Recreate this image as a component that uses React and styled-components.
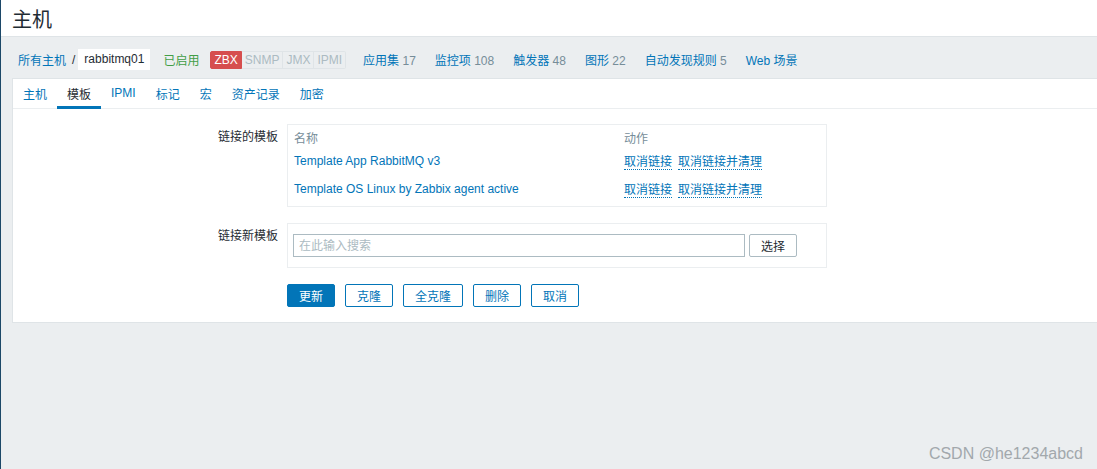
import React from 'react'
import styled, { createGlobalStyle } from 'styled-components'

const GlobalStyle = createGlobalStyle`
  html, body {
    margin: 0;
    padding: 0;
    background: #ebeef0;
  }
  body {
    font-family: "Liberation Sans", Arial, "Noto Sans CJK SC", sans-serif;
    font-size: 12px;
    color: #1f2c33;
    overflow: hidden;
  }
`

const tabs = ['主机', '模板', 'IPMI', '标记', '宏', '资产记录', '加密']
const stats = [
  { name: '应用集', count: 17 },
  { name: '监控项', count: 108 },
  { name: '触发器', count: 48 },
  { name: '图形', count: 22 },
  { name: '自动发现规则', count: 5 },
  { name: 'Web 场景' },
]
const templates = ['Template App RabbitMQ v3', 'Template OS Linux by Zabbix agent active']

export default function App() {
  return (
    <Page>
      <GlobalStyle />
      <Header>
        <Title>主机</Title>
      </Header>
      <Breadcrumbs>
        <Crumb>所有主机</Crumb>
        <Sep>/</Sep>
        <HostName>rabbitmq01</HostName>
        <Enabled>已启用</Enabled>
        <Statuses>
          <Status active>ZBX</Status>
          <Status>SNMP</Status>
          <Status>JMX</Status>
          <Status>IPMI</Status>
        </Statuses>
        <Stats>
          {stats.map((s) => (
            <Stat key={s.name}>
              <Crumb>{s.name}</Crumb>
              {s.count !== undefined && <Count> {s.count}</Count>}
            </Stat>
          ))}
        </Stats>
      </Breadcrumbs>
      <Panel>
        <TabBar>
          {tabs.map((t) => (
            <Tab key={t} active={t === '模板'}>{t}</Tab>
          ))}
        </TabBar>
        <Form>
          <Label>链接的模板</Label>
          <Box>
            <Table>
              <thead>
                <tr>
                  <Th>名称</Th>
                  <Th>动作</Th>
                </tr>
              </thead>
              <tbody>
                {templates.map((t) => (
                  <tr key={t}>
                    <Td><Link>{t}</Link></Td>
                    <Td>
                      <Action>取消链接</Action>
                      <Action>取消链接并清理</Action>
                    </Td>
                  </tr>
                ))}
              </tbody>
            </Table>
          </Box>
          <Label>链接新模板</Label>
          <SearchBox>
            <Search placeholder="在此输入搜索" />
            <SelectButton>选择</SelectButton>
          </SearchBox>
          <div />
          <Buttons>
            <Button primary>更新</Button>
            <Button>克隆</Button>
            <Button>全克隆</Button>
            <Button>删除</Button>
            <Button>取消</Button>
          </Buttons>
        </Form>
      </Panel>
      <Watermark>CSDN @he1234abcd</Watermark>
    </Page>
  )
}

const Page = styled.div`
  position: relative;
  height: 469px;
  border-left: 1px solid #1c4868;
  box-sizing: border-box;
`
const Header = styled.div`
  height: 36px;
  background: #fff;
  border-bottom: 1px solid #dfe4e7;
  display: flex;
  align-items: center;
  padding-left: 11px;
`
const Title = styled.h1`
  margin: 0;
  font-size: 20px;
  font-weight: normal;
  color: #1f2c33;
`
const Breadcrumbs = styled.div`
  display: flex;
  align-items: center;
  height: 41px;
  box-sizing: border-box;
  padding: 4px 0 0 17px;
`
const Crumb = styled.span`
  color: #0275b8;
`
const Sep = styled.span`
  color: #1f2c33;
  margin: 0 3px 0 6px;
`
const HostName = styled.span`
  background: #fff;
  height: 21px;
  line-height: 21px;
  padding: 0 6px;
  color: #1f2c33;
`
const Enabled = styled.span`
  color: #429e47;
  margin-left: 13px;
`
const Statuses = styled.span`
  display: flex;
  margin-left: 11px;
`
const Status = styled.span`
  height: 16px;
  line-height: 16px;
  padding: 0 3px;
  font-size: 12px;
  background: ${(p) => (p.active ? '#d64e4e' : '#ebeef0')};
  color: ${(p) => (p.active ? '#fff' : '#acbbc2')};
  border: 1px solid ${(p) => (p.active ? '#d64e4e' : '#dfe4e7')};
  border-left-width: ${(p) => (p.active ? '1px' : '0')};
  &:first-child {
    border-radius: 2px 0 0 2px;
  }
  &:last-child {
    border-radius: 0 2px 2px 0;
  }
`
const Stats = styled.span`
  display: flex;
  gap: 19px;
  margin-left: 17px;
`
const Stat = styled.span``
const Count = styled.span`
  color: #768d99;
`
const Panel = styled.div`
  margin-left: 11px;
  background: #fff;
  border: 1px solid #dfe4e7;
  border-right: 0;
  padding-bottom: 15px;
`
const TabBar = styled.div`
  display: flex;
  height: 29px;
  border-bottom: 1px solid #ebeef0;
`
const Tab = styled.span`
  display: flex;
  align-items: center;
  padding: 0 10px;
  font-size: 12px;
  color: ${(p) => (p.active ? '#1f2c33' : '#0275b8')};
  border-bottom: 3px solid ${(p) => (p.active ? '#0275b8' : 'transparent')};
  margin-bottom: -1px;
  padding-top: 1px;
`
const Form = styled.div`
  display: grid;
  grid-template-columns: 265px 540px;
  column-gap: 9px;
  row-gap: 16px;
  padding-top: 15px;
`
const Label = styled.div`
  text-align: right;
  padding-top: 3px;
  color: #1f2c33;
`
const Box = styled.div`
  border: 1px solid #ebeef0;
  padding: 3px 6px 3px;
  box-sizing: border-box;
`
const Table = styled.table`
  border-collapse: collapse;
  width: 100%;
`
const Th = styled.th`
  text-align: left;
  font-weight: normal;
  color: #768d99;
  padding: 0;
  height: 19px;
  &:first-child {
    width: 330px;
  }
`
const Td = styled.td`
  padding: 0 0 1px;
  height: 27px;
`
const Link = styled.span`
  color: #0275b8;
`
const Action = styled.span`
  color: #0275b8;
  border-bottom: 1px dotted #0275b8;
  margin-right: 6px;
`
const SearchBox = styled.div`
  border: 1px solid #ebeef0;
  padding: 10px 5px;
  display: flex;
  gap: 4px;
`
const Search = styled.input`
  width: 452px;
  height: 23px;
  box-sizing: border-box;
  border: 1px solid #acbbc2;
  padding: 0 5px;
  font-family: inherit;
  font-size: 12px;
  outline: none;
  &::placeholder {
    color: #acbbc2;
  }
`
const SelectButton = styled.button`
  width: 48px;
  height: 23px;
  background: #fff;
  border: 1px solid #acbbc2;
  border-radius: 2px;
  font-family: inherit;
  font-size: 12px;
  color: #1f2c33;
`
const Buttons = styled.div`
  display: flex;
  gap: 10px;
`
const Button = styled.button`
  height: 23px;
  padding: 0 11px;
  border: 1px solid #0275b8;
  border-radius: 2px;
  background: ${(p) => (p.primary ? '#0275b8' : '#fff')};
  color: ${(p) => (p.primary ? '#fff' : '#0275b8')};
  font-family: inherit;
  font-size: 12px;
`
const Watermark = styled.div`
  position: absolute;
  right: 14px;
  bottom: 6px;
  font-size: 16px;
  color: #a2a8ac;
`
